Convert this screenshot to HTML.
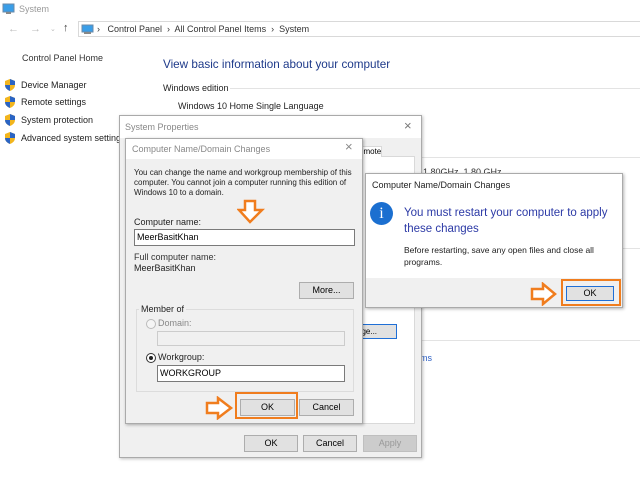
<!DOCTYPE html>
<html><head><meta charset="utf-8"><style>
*{box-sizing:border-box;margin:0;padding:0}
body{width:640px;height:480px;overflow:hidden;background:#fff;font-family:"Liberation Sans",sans-serif;font-size:9px;color:#000;position:relative}
.a{position:absolute;white-space:nowrap}
.btn{position:absolute;background:#e1e1e1;border:1px solid #adadad;text-align:center;font-size:9px;line-height:14px}
.inp{position:absolute;background:#fff;border:1px solid #7a7a7a;font-size:9px;padding-left:2px;line-height:14px}
.line{position:absolute;height:1px;background:#e3e3e3}
</style></head><body>
<svg class="a" style="left:2px;top:3px" width="14" height="12"><rect x="1" y="1" width="11" height="8" fill="#3a9ee8" stroke="#6a8aa8"/><rect x="4" y="9" width="5" height="2" fill="#888"/></svg>
<div class="a" style="left:19px;top:4px;color:#999;font-size:9px">System</div>
<div class="a" style="left:8px;top:23px;color:#bbb;font-size:11px">←</div>
<div class="a" style="left:30px;top:23px;color:#bbb;font-size:11px">→</div>
<div class="a" style="left:50px;top:25px;color:#bbb;font-size:7px">⌄</div>
<div class="a" style="left:63px;top:22px;color:#444;font-size:11px">↑</div>
<div class="a" style="left:78px;top:21px;width:570px;height:16px;border:1px solid #d9d9d9"></div>
<svg class="a" style="left:81px;top:24px" width="14" height="11"><rect x="1" y="1" width="11" height="7" fill="#3a9ee8" stroke="#6a8aa8"/><rect x="3" y="8" width="7" height="2" fill="#888"/></svg>
<div class="a" style="left:97px;top:24px;font-size:9px;color:#333">›&nbsp;&nbsp; Control Panel &nbsp;›&nbsp; All Control Panel Items &nbsp;›&nbsp; System</div>
<div class="a" style="left:22px;top:53px;color:#333">Control Panel Home</div>
<div class="a" style="left:21px;top:80px;color:#222">Device Manager</div>
<div class="a" style="left:21px;top:97px;color:#222">Remote settings</div>
<div class="a" style="left:21px;top:115px;color:#222">System protection</div>
<div class="a" style="left:21px;top:133px;color:#222">Advanced system settings</div>
<svg class="a" style="left:4px;top:79px" width="12" height="70">
<g id="s"><path d="M6 0 L11 2 L11 6 Q11 10 6 12 Q1 10 1 6 L1 2 Z" fill="#f2b51d"/><path d="M6 0 L11 2 L11 6 L6 6 Z M1 6 L6 6 L6 12 Q1 10 1 6Z" fill="#2a64c4"/></g>
<use href="#s" y="17"/><use href="#s" y="35"/><use href="#s" y="53"/></svg>
<div class="a" style="left:163px;top:58px;font-size:11.7px;color:#1e3a8a">View basic information about your computer</div>
<div class="a" style="left:163px;top:83px;color:#222">Windows edition</div>
<div class="line" style="left:230px;top:88px;width:410px"></div>
<div class="a" style="left:178px;top:101px;color:#222">Windows 10 Home Single Language</div>
<div class="line" style="left:421px;top:157px;width:219px"></div>
<div class="line" style="left:421px;top:248px;width:219px"></div>
<div class="line" style="left:421px;top:340px;width:219px"></div>
<div class="a" style="left:423px;top:167px;color:#333">1.80GHz &nbsp;1.80 GHz</div>
<div class="a" style="left:420px;top:353px;color:#2a5ec4">ms</div>
<div class="a" style="left:119px;top:115px;width:303px;height:343px;background:#f0f0f0;border:1px solid #aaa;box-shadow:1px 1px 3px rgba(0,0,0,.25)">
<div class="a" style="left:0;top:0;width:301px;height:22px;background:#fff"></div>
<div class="a" style="left:5px;top:6px;color:#888">System Properties</div>
<div class="a" style="left:284px;top:2px;color:#777;font-size:13px">×</div>
<div class="a" style="left:6px;top:40px;width:289px;height:268px;background:#fff;border:1px solid #d9d9d9"></div>
<div class="a" style="left:236px;top:30px;width:26px;height:11px;background:#fff;border:1px solid #d9d9d9;border-bottom:none;font-size:8px;padding-left:2px">emote</div>
<div class="a" style="left:236px;top:170px;width:5px;height:14px;background:#ccc"></div>
<div class="btn" style="left:236px;top:208px;width:41px;height:15px;border-color:#1f6fd6;font-size:8px;text-align:left">nge...</div>
<div class="btn" style="left:124px;top:319px;width:54px;height:17px">OK</div>
<div class="btn" style="left:183px;top:319px;width:54px;height:17px">Cancel</div>
<div class="btn" style="left:243px;top:319px;width:54px;height:17px;color:#999;background:#ccc;border-color:#bfbfbf">Apply</div>
</div>
<div class="a" style="left:125px;top:138px;width:238px;height:286px;background:#f0f0f0;border:1px solid #aaa;box-shadow:1px 1px 3px rgba(0,0,0,.3)">
<div class="a" style="left:0;top:0;width:236px;height:20px;background:#fff"></div>
<div class="a" style="left:6px;top:5px;color:#888">Computer Name/Domain Changes</div>
<div class="a" style="left:219px;top:0px;color:#888;font-size:13px">×</div>
<div class="a" style="left:8px;top:29px;font-size:8px;line-height:10px;color:#222">You can change the name and workgroup membership of this<br>computer. You cannot join a computer running this edition of<br>Windows 10 to a domain.</div>
<svg class="a" style="left:111px;top:60px" width="28" height="26"><path d="M8 2 H18 V11 H25 L13 23 L2 11 H8 Z" fill="#fff" stroke="#f07d1e" stroke-width="2.5"/></svg>
<div class="a" style="left:8px;top:78px;color:#222">Computer name:</div>
<div class="inp" style="left:8px;top:90px;width:221px;height:17px">MeerBasitKhan</div>
<div class="a" style="left:8px;top:113px;color:#333">Full computer name:</div>
<div class="a" style="left:8px;top:124px;color:#222">MeerBasitKhan</div>
<div class="btn" style="left:173px;top:143px;width:55px;height:17px">More...</div>
<div class="a" style="left:10px;top:170px;width:218px;height:83px;border:1px solid #dcdcdc"></div>
<div class="a" style="left:13px;top:165px;background:#f0f0f0;padding:0 2px;color:#222">Member of</div>
<div class="a" style="left:20px;top:180px;width:10px;height:10px;border:1px solid #bbb;border-radius:50%;background:#f5f5f5"></div>
<div class="a" style="left:32px;top:179px;color:#888">Domain:</div>
<div class="a" style="left:31px;top:192px;width:188px;height:15px;border:1px solid #ccc;background:#f0f0f0"></div>
<div class="a" style="left:20px;top:214px;width:10px;height:10px;border:1px solid #333;border-radius:50%;background:#fff"></div>
<div class="a" style="left:23px;top:217px;width:4px;height:4px;border-radius:50%;background:#222"></div>
<div class="a" style="left:32px;top:213px;color:#222">Workgroup:</div>
<div class="inp" style="left:31px;top:226px;width:188px;height:17px">WORKGROUP</div>
<svg class="a" style="left:79px;top:257px" width="30" height="24"><path d="M2 7 H13 V2 L26 12 L13 22 V17 H2 Z" fill="#fff" stroke="#f07d1e" stroke-width="2.5"/></svg>
<div class="a" style="left:109px;top:253px;width:63px;height:27px;border:2px solid #f07d1e"></div>
<div class="btn" style="left:114px;top:260px;width:55px;height:17px">OK</div>
<div class="btn" style="left:173px;top:260px;width:55px;height:17px">Cancel</div>
</div>
<div class="a" style="left:365px;top:173px;width:258px;height:135px;background:#fff;border:1px solid #aaa;box-shadow:1px 1px 3px rgba(0,0,0,.3)">
<div class="a" style="left:6px;top:6px;color:#222">Computer Name/Domain Changes</div>
<div class="a" style="left:4px;top:28px;width:23px;height:23px;border-radius:50%;background:#1b6fd0;color:#fff;font-size:16px;text-align:center;line-height:23px;font-family:'Liberation Serif',serif">i</div>
<div class="a" style="left:38px;top:31px;font-size:11.5px;line-height:16px;color:#2c3aa6">You must restart your computer to apply<br>these changes</div>
<div class="a" style="left:38px;top:71px;font-size:8.5px;line-height:11.5px;color:#222">Before restarting, save any open files and close all<br>programs.</div>
<div class="a" style="left:0;top:104px;width:256px;height:29px;background:#f0f0f0"></div>
<svg class="a" style="left:164px;top:108px" width="28" height="24"><path d="M2 7 H13 V2 L25 12 L13 22 V17 H2 Z" fill="#fff" stroke="#f07d1e" stroke-width="2.5"/></svg>
<div class="a" style="left:195px;top:105px;width:60px;height:27px;border:2px solid #f07d1e"></div>
<div class="btn" style="left:200px;top:112px;width:48px;height:15px;border-color:#1f6fd6;line-height:13px">OK</div>
</div>
</body></html>
